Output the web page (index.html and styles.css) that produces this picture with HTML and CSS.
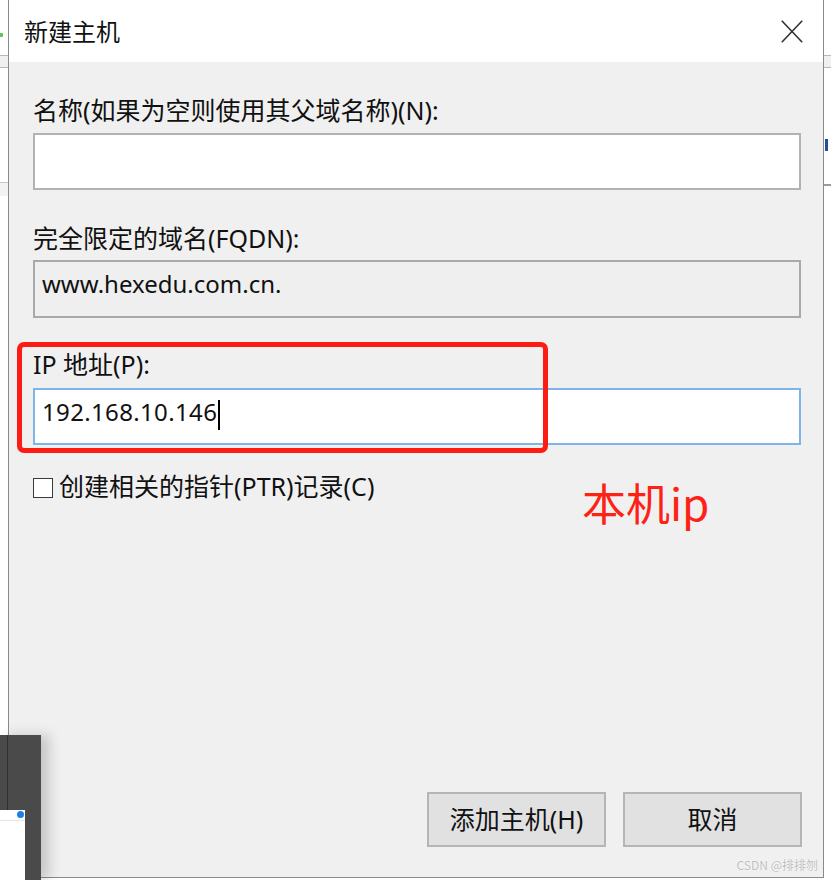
FILE: index.html
```html
<!DOCTYPE html>
<html lang="zh-CN">
<head>
<meta charset="utf-8">
<title>新建主机</title>
<link rel="stylesheet" href="styles.css">
</head>
<body>
<div class="screen">
  <div class="strip strip-left"></div>
  <div class="dialog">
    <div class="titlebar">
      <span class="title">新建主机</span>
      <svg class="close" width="22" height="23" viewBox="0 0 22 23" aria-hidden="true">
        <path d="M0.8 0.8 L21.2 22.2 M21.2 0.8 L0.8 22.2" stroke="#333" stroke-width="1.6" fill="none"/>
      </svg>
    </div>
    <div class="content">
      <div class="lbl lbl-name">名称(如果为空则使用其父域名称)(N):</div>
      <div class="input input-name"></div>
      <div class="lbl lbl-fqdn">完全限定的域名(FQDN):</div>
      <div class="input input-ro">www.hexedu.com.cn.</div>
      <div class="lbl lbl-ip">IP 地址(P):</div>
      <div class="input input-focus"><span class="ip">192.168.10.146</span><span class="caret"></span></div>
      <div class="check"><span class="box"></span><span class="check-text">创建相关的指针(PTR)记录(C)</span></div>
      <div class="buttons">
        <div class="btn">添加主机(H)</div>
        <div class="btn">取消</div>
      </div>
    </div>
  </div>
  <div class="strip strip-right"></div>

  <div class="redbox"></div>
  <div class="note">本机ip</div>
  <div class="darkwin"><div class="miniwin"><span class="dot"></span></div></div>
  <div class="watermark">CSDN @排排刎</div>
</div>
</body>
</html>
```

FILE: styles.css
```css
* { box-sizing: border-box; }
html, body { margin: 0; padding: 0; background: #fff; }
body {
  font-family: "Noto Sans", "Noto Sans CJK SC", sans-serif;
  color: #111;
}
.screen {
  position: relative;
  width: 831px;
  height: 880px;
  overflow: hidden;
  display: flex;
  background: #fff;
}
.strip { flex: none; height: 100%; }
.strip-left {
  width: 8px;
  background:
    radial-gradient(circle at 1px 35px, #5cc85c 0 2px, transparent 2.5px),
    linear-gradient(to bottom, #fff 0 55px, #b8b8b8 55px 56px, #f0f0f0 56px 67px, #b8b8b8 67px 68px, #fff 68px 182px, #c8c8c8 182px 183px, #f2f2f2 183px 196px, #fff 196px);
}
.strip-right {
  width: 7px;
  background:
    linear-gradient(to bottom, transparent 0 139px, #1f4f9e 139px 151px, transparent 151px),
    linear-gradient(to bottom, #fff 0 55px, #b8b8b8 55px 56px, #f0f0f0 56px 67px, #b8b8b8 67px 68px, #fff 68px 184px, #9a9a9a 184px 186px, #fff 186px);
  background-size: 3px 100%, 100% 100%;
  background-position: 1px 0, 0 0;
  background-repeat: no-repeat;
}
.dialog {
  flex: none;
  width: 816px;
  height: 878px;
  border-left: 1px solid #8a8a8a;
  border-right: 1px solid #8a8a8a;
  border-bottom: 1px solid #8a8a8a;
  display: flex;
  flex-direction: column;
  background: #f0f0f0;
}
.titlebar {
  flex: none;
  height: 62px;
  background: #fff;
  display: flex;
  align-items: center;
  justify-content: space-between;
  padding: 0 20px 1px 15px;
}
.title {
  font-family: "Noto Sans CJK SC", sans-serif;
  font-size: 24px;
  line-height: 30px;
  color: #111;
}
.close { display: block; margin-top: 1px; }
.content {
  flex: 1;
  display: flex;
  flex-direction: column;
  padding: 33px 21px 30px 24px;
}
.lbl {
  font-size: 25px;
  line-height: 30px;
  height: 30px;
  white-space: nowrap;
}
.input {
  width: 768px;
  height: 57px;
  border: 2px solid #b2b2b2;
  background: #fff;
  display: flex;
  align-items: center;
  padding: 0 0 10px 7px;
  font-size: 24px;
  line-height: 30px;
  white-space: nowrap;
}
.input-name { margin-top: 8px; }
.lbl-fqdn { margin-top: 33px; }
.input-ro {
  margin-top: 7px;
  height: 58px;
  background: #efefef;
  border-color: #a9a9a9;
}
.lbl-ip { margin-top: 31px; }
.input-focus {
  margin-top: 9px;
  border-color: #7db5ea;
}
.ip { letter-spacing: 0.35px; }
.caret {
  display: inline-block;
  width: 2px;
  height: 30px;
  background: #000;
  margin-left: 1px;
  margin-top: 6px;
}
.check {
  margin-top: 26px;
  height: 30px;
  display: flex;
  align-items: center;
  gap: 6px;
}
.box {
  width: 20px;
  height: 20px;
  border: 1.5px solid #3a3a3a;
  background: #fff;
  margin-top: 3px;
}
.check-text {
  font-size: 25px;
  line-height: 30px;
  white-space: nowrap;
}
.buttons {
  margin-top: auto;
  display: flex;
  justify-content: flex-end;
  gap: 17px;
}
.btn {
  width: 179px;
  height: 55px;
  background: #e1e1e1;
  border: 2px solid #b5b5b5;
  display: flex;
  align-items: center;
  justify-content: center;
  font-size: 25px;
  line-height: 30px;
  color: #111;
  padding-bottom: 2px;
}
.redbox {
  position: absolute;
  left: 17px;
  top: 342px;
  width: 531px;
  height: 111px;
  border: 5px solid #fd1c14;
  border-radius: 7px;
}
.note {
  position: absolute;
  left: 582px;
  top: 476px;
  font-family: "Noto Sans CJK SC", sans-serif;
  font-size: 44px;
  line-height: 52px;
  color: #fd2216;
  white-space: nowrap;
}
.darkwin {
  position: absolute;
  left: 0;
  top: 735px;
  width: 41px;
  height: 145px;
  background: linear-gradient(to right, #4a4a4a 0 7px, #303030 7px 8px, #4a4a4a 8px);
  box-shadow: 8px 0 12px rgba(0, 0, 0, 0.18);
}
.miniwin {
  position: absolute;
  left: 0;
  top: 75px;
  width: 25px;
  height: 70px;
  background: linear-gradient(to bottom, #fff 0 10px, #e6e6e6 10px 11px, #fff 11px);
}
.dot {
  position: absolute;
  left: 17px;
  top: 1px;
  width: 7px;
  height: 7px;
  border-radius: 50%;
  background: #1a7fe6;
}
.watermark {
  position: absolute;
  right: 13px;
  bottom: 8px;
  font-family: "Noto Sans CJK SC", sans-serif;
  font-size: 12px;
  line-height: 14px;
  color: #bdbdbd;
  text-shadow: 0 0 1px #fff, 0 0 1px #fff;
  white-space: nowrap;
}
```
